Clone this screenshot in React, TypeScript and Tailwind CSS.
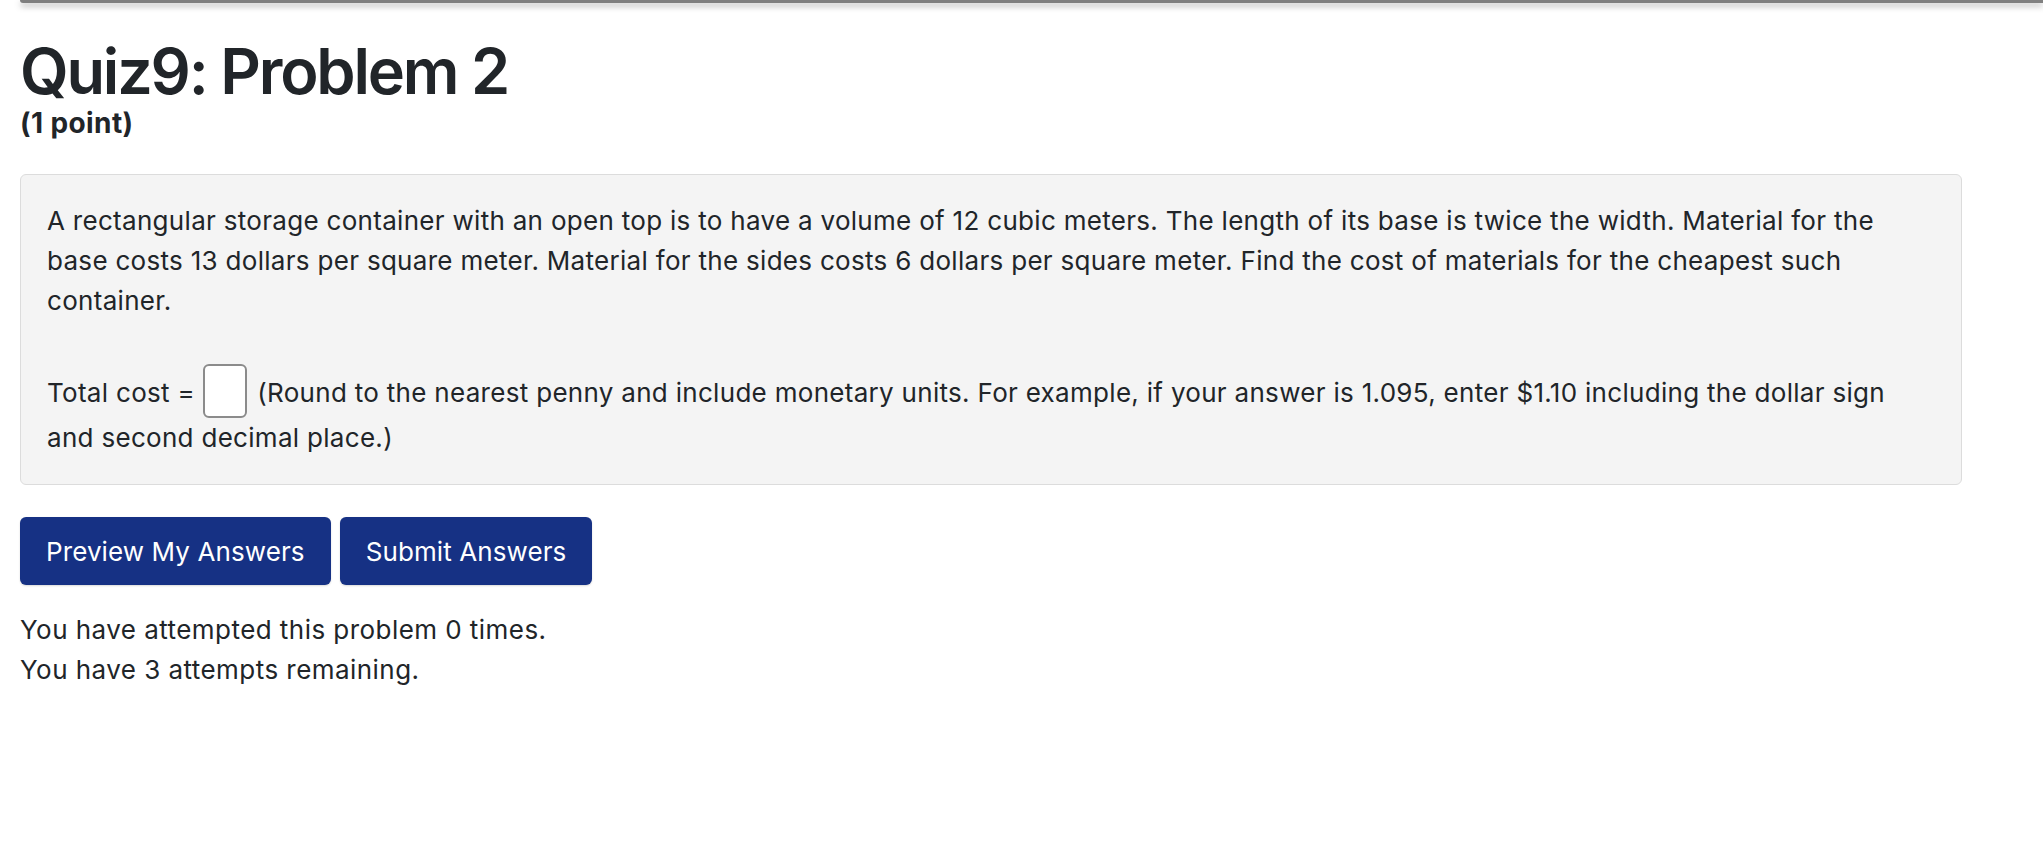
export default function App() {
  return (
    <div className="min-h-screen bg-white font-['Inter','Noto_Sans',sans-serif] text-[#212529]">
      {/* bottom edge of the navbar scrolled above */}
      <div className="ml-5 h-[3px] rounded-bl-md bg-[#808080] shadow-[0_3px_6px_rgba(0,0,0,0.35)]" />

      <div className="px-5">
        <h1 className="mt-[30px] text-[63px] font-semibold leading-[76px] tracking-[-2.2px]">
          Quiz9: Problem 2
        </h1>
        <div className="text-[28px] font-bold leading-[28px] tracking-[0.4px]">(1 point)</div>

        <div className="mt-[37px] w-[1942px] rounded-md border border-[#dcdcdc] bg-[#f4f4f4] pt-[26px] pr-[50px] pb-[26px] pl-[26px] text-[26px] leading-[40px] tracking-[0.3px]">
          <p>
            A rectangular storage container with an open top is to have a volume of 12 cubic meters. The length of its
            base is twice the width. Material for the base costs 13 dollars per square meter. Material for the sides
            costs 6 dollars per square meter. Find the cost of materials for the cheapest such container.
          </p>
          <p className="mt-[43px]">
            Total cost ={" "}
            <span className="mr-[3px] inline-block h-[54px] w-[44px] rounded-[6px] border-2 border-[#8b8b8b] bg-white align-[-16px]" />{" "}
            (Round to the nearest penny and include monetary units. For example, if your answer is 1.095, enter $1.10
            including the dollar sign and second decimal place.)
          </p>
        </div>

        <div className="mt-[32px] flex gap-[9px]">
          <button className="h-[68px] rounded-md bg-[#163184] px-[26px] text-[26px] tracking-[0.1px] text-white shadow-[0_1px_2px_rgba(0,0,0,0.15)]">
            Preview My Answers
          </button>
          <button className="h-[68px] rounded-md bg-[#163184] px-[26px] text-[26px] tracking-[0.1px] text-white shadow-[0_1px_2px_rgba(0,0,0,0.15)]">
            Submit Answers
          </button>
        </div>

        <div className="mt-[25px] text-[26px] leading-[40px] tracking-[0.45px]">
          <div>You have attempted this problem 0 times.</div>
          <div>You have 3 attempts remaining.</div>
        </div>
      </div>
    </div>
  );
}
